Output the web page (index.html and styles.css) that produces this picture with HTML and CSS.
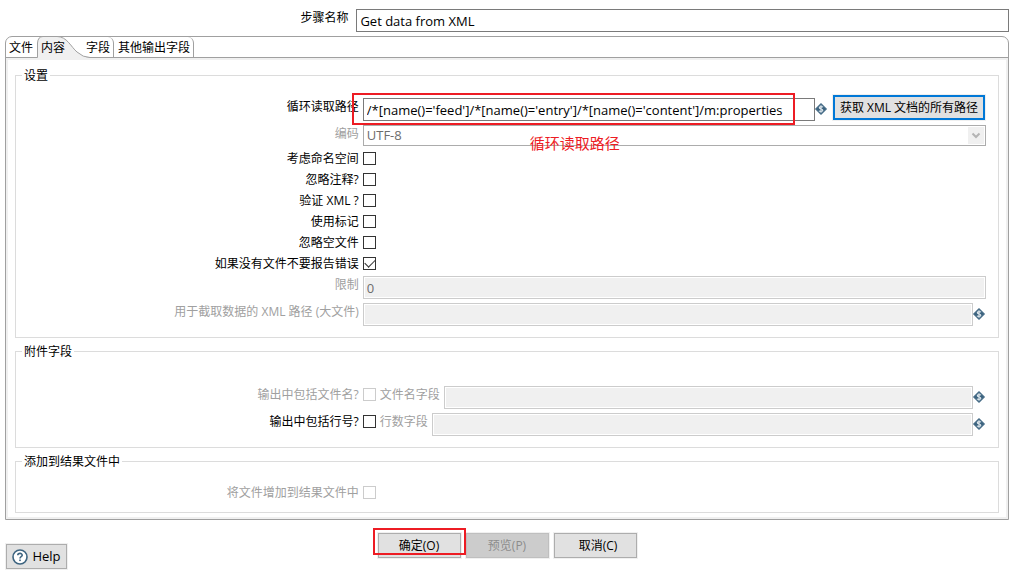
FILE: index.html
```html
<!DOCTYPE html>
<html lang="zh-CN">
<head>
  <meta charset="UTF-8" />
  <meta name="viewport" content="width=device-width, initial-scale=1.0"/>
  <title>Get data from XML</title>
  <link rel="stylesheet" href="styles.css">
</head>
<body>

  <svg class="defs" aria-hidden="true">
    <symbol id="variable" viewBox="0 0 12 13">
      <path d="M6 0.5 L11.5 6 L6 11.5 L0.5 6 Z" fill="#3d6480" stroke="#3d6480" stroke-linejoin="round"/>
      <path d="M7.9 4.3 C7.3 3.3 4.3 3.3 4.3 4.8 C4.3 6.4 7.8 5.6 7.8 7.3 C7.8 8.8 4.6 8.8 4 7.7 M6 2.2 V9.8" fill="none" stroke="#dfe7ec" stroke-width="1.2"/>
    </symbol>
  </svg>

  <div class="step-name">
    <label for="stepName">步骤名称</label>
    <input type="text" id="stepName" value="Get data from XML">
  </div>

  <div class="folder">
    <div class="tabs" role="tablist">
      <button class="tab" role="tab">文件</button>
      <button class="tab active" role="tab" aria-selected="true">
        <svg class="tab-shape" viewBox="0 0 54 22" aria-hidden="true">
          <path d="M0.5 22 V7 Q1 0.5 6 0.5 H20 C30 0.5 34 11 40 16 Q46 21.5 53 21.5 V22 Z" fill="#f0f0f0"/>
          <path d="M0.5 21.5 V7 Q1 0.5 6 0.5 H20 C30 0.5 34 11 40 16 Q46 21.5 53 21.5" fill="none" stroke="#a0a0a0"/>
        </svg>
        <span>内容</span>
      </button>
      <button class="tab line" role="tab">字段</button>
      <button class="tab line" role="tab">其他输出字段</button>
    </div>

    <div class="panel">
      <fieldset>
        <legend>设置</legend>
        <div class="row">
          <label class="name" for="loopPath">循环读取路径</label>
          <div class="field">
            <input type="text" id="loopPath" value="/*[name()='feed']/*[name()='entry']/*[name()='content']/m:properties">
            <span class="mark mark-path"></span>
          </div>
          <svg class="var"><use href="#variable"/></svg>
          <button class="btn btn-paths">获取 XML 文档的所有路径</button>
        </div>
        <div class="row off">
          <label class="name" for="encoding">编码</label>
          <div class="field">
            <select id="encoding" disabled>
              <option>UTF-8</option>
            </select>
            <svg class="arrow" viewBox="0 0 16 17" aria-hidden="true"><path d="M4.5 6.5 L8 10 L11.5 6.5" fill="none" stroke="#b4b4b4" stroke-width="2"/></svg>
            <span class="note">循环读取路径</span>
          </div>
        </div>
        <div class="row">
          <label class="name" for="namespace">考虑命名空间</label>
          <input type="checkbox" id="namespace">
        </div>
        <div class="row">
          <label class="name" for="comments">忽略注释?</label>
          <input type="checkbox" id="comments">
        </div>
        <div class="row">
          <label class="name" for="validate">验证 XML ?</label>
          <input type="checkbox" id="validate">
        </div>
        <div class="row">
          <label class="name" for="token">使用标记</label>
          <input type="checkbox" id="token">
        </div>
        <div class="row">
          <label class="name" for="emptyFile">忽略空文件</label>
          <input type="checkbox" id="emptyFile">
        </div>
        <div class="row">
          <label class="name" for="noError">如果没有文件不要报告错误</label>
          <input type="checkbox" id="noError" checked>
        </div>
        <div class="row off">
          <label class="name" for="limit">限制</label>
          <div class="field"><input type="text" id="limit" value="0" disabled></div>
        </div>
        <div class="row off">
          <label class="name" for="prune">用于截取数据的 XML 路径 (大文件)</label>
          <div class="field"><input type="text" id="prune" disabled></div>
          <svg class="var end"><use href="#variable"/></svg>
        </div>
      </fieldset>

      <fieldset class="extra">
        <legend>附件字段</legend>
        <div class="row off">
          <label class="name" for="inclFile">输出中包括文件名?</label>
          <input type="checkbox" id="inclFile" disabled>
          <label class="sub" for="fileField">文件名字段</label>
          <div class="field"><input type="text" id="fileField" disabled></div>
          <svg class="var end"><use href="#variable"/></svg>
        </div>
        <div class="row">
          <label class="name" for="inclRow">输出中包括行号?</label>
          <input type="checkbox" id="inclRow">
          <label class="sub" for="rowField">行数字段</label>
          <div class="field"><input type="text" id="rowField" disabled></div>
          <svg class="var end"><use href="#variable"/></svg>
        </div>
      </fieldset>

      <fieldset>
        <legend>添加到结果文件中</legend>
        <div class="row off">
          <label class="name" for="addResult">将文件增加到结果文件中</label>
          <input type="checkbox" id="addResult" disabled>
        </div>
      </fieldset>
    </div>
  </div>

  <div class="footer">
    <button class="btn btn-help">
      <svg viewBox="0 0 16 16" aria-hidden="true">
        <circle cx="8" cy="8" r="7" fill="#fff" stroke="#3d6480" stroke-width="1.6"/>
        <path d="M5.8 6.3 C5.8 3.7 10.2 3.7 10.2 6.2 C10.2 7.7 8 7.6 8 9.4" fill="none" stroke="#3d6480" stroke-width="1.6"/>
        <rect x="7.2" y="10.5" width="1.6" height="1.6" fill="#3d6480"/>
      </svg>
      Help
    </button>
    <div class="actions">
      <div class="ok">
        <button class="btn">确定(O)</button>
        <span class="mark mark-ok"></span>
      </div>
      <button class="btn" disabled>预览(P)</button>
      <button class="btn btn-cancel">取消(C)</button>
    </div>
  </div>

</body>
</html>
```
FILE: styles.css
```css
* {
  box-sizing: border-box;
}

body {
  margin: 0;
  padding: 9px 5px 5px;
  background: #fff;
  color: #000;
  font-family: "Open Sans", "Noto Sans CJK SC", sans-serif;
  font-size: 12px;
  line-height: 17px;
}

button, input, select {
  margin: 0;
  font: inherit;
  color: inherit;
}

.defs {
  position: absolute;
  width: 0;
  height: 0;
}

.step-name {
  display: flex;
  margin-bottom: 4px;
}

.step-name label {
  width: 35%;
  padding-right: 8px;
  text-align: right;
}

.step-name input {
  flex: 1;
}

input[type="text"] {
  display: block;
  width: 100%;
  min-width: 0;
  height: 23px;
  padding: 0 3px;
  border: 1px solid #7a7a7a;
  border-radius: 0;
  background: #fff;
  font-size: 13px;
}

input[type="text"]:disabled {
  border-color: #ccc;
  background: #f0f0f0;
  box-shadow: inset 0 0 0 1px #fff;
  color: #6d6d6d;
}

/* tabs */
.folder {
  border: 1px solid #a0a0a0;
  border-radius: 7px 7px 0 0;
}

.tabs {
  display: flex;
  height: 21px;
  border-bottom: 1px solid #a0a0a0;
}

.tab {
  height: 20px;
  padding: 0 4px 0 3px;
  border: 0;
  background: none;
  white-space: nowrap;
}

.tab.line {
  padding: 0 3px 0 4px;
  border-right: 1px solid #a0a0a0;
  border-top-right-radius: 6px;
}

.tab.active {
  position: relative;
  width: 45px;
  padding-left: 4px;
  text-align: left;
}

.tab.active span {
  position: relative;
}

.tab-shape {
  position: absolute;
  left: 0;
  top: -1px;
  width: 54px;
  height: 22px;
}

.panel {
  display: flex;
  flex-direction: column;
  gap: 5px;
  padding: 7px 7px 4px;
  border: 2px solid #f0f0f0;
}

fieldset {
  min-width: 0;
  margin: 0;
  padding: 14px 12px 11px 5px;
  border: 1px solid #dcdcdc;
}

fieldset.extra {
  padding-top: 26px;
}

legend {
  margin-left: 1px;
  padding: 0 2px;
}

.row {
  display: flex;
  align-items: flex-start;
  gap: 4px;
}

.row + .row {
  margin-top: 4px;
}

.name {
  flex: none;
  width: 35%;
  text-align: right;
  white-space: nowrap;
}

.off, .sub {
  color: #a0a0a0;
}

.field {
  position: relative;
  flex: 1;
  min-width: 0;
}

.var {
  width: 12px;
  height: 13px;
  margin: 5px 0 0 -4px;
}

.var.end {
  margin-right: 1px;
}

input[type="checkbox"] {
  appearance: none;
  width: 13px;
  height: 13px;
  margin: 2px 0;
  border: 1px solid #333;
  background: #fff;
}

input[type="checkbox"]:disabled {
  border-color: #ccc;
}

input[type="checkbox"]:checked::after {
  content: "";
  display: block;
  width: 9px;
  height: 5px;
  margin: 2px 1px;
  border: solid #333;
  border-width: 0 0 1px 1px;
  transform: translateY(-1px) rotate(-45deg);
}

select {
  display: block;
  appearance: none;
  width: 100%;
  height: 21px;
  padding: 0 3px;
  border: 1px solid #acacac;
  border-radius: 0;
  background: #fff;
  font-size: 13px;
}

select:disabled {
  color: #6d6d6d;
  opacity: 1;
}

.arrow {
  position: absolute;
  top: 2px;
  right: 2px;
  width: 16px;
  height: 17px;
  background: #f0f0f0;
}

/* buttons */
.btn {
  width: 83px;
  height: 25px;
  padding: 0;
  border: 1px solid #adadad;
  background: #e1e1e1;
  box-shadow: 0 0 0 1px #f0f0f0;
  white-space: nowrap;
}

.btn:disabled {
  border-color: #bfbfbf;
  background: #ccc;
  color: #8c8c8c;
}

.btn-paths {
  width: 152px;
  margin: -3px 1px -3px 2px;
  border: 2px solid #0078d7;
}

.btn-cancel {
  padding-left: 6px;
}

.btn-help {
  display: flex;
  align-items: center;
  justify-content: center;
  gap: 4px;
  width: 61px;
  margin-left: 1px;
  font-size: 13px;
}

.btn-help svg {
  width: 16px;
  height: 16px;
}

.footer {
  display: grid;
  grid-template-columns: 1fr auto 1fr;
  align-items: end;
  margin-top: 13px;
}

.actions {
  display: flex;
  gap: 5px;
  padding-bottom: 11px;
}

.ok {
  position: relative;
}

/* red marks over the form */
.mark {
  position: absolute;
  z-index: 1;
  border: 2px solid #ed1c24;
  pointer-events: none;
}

.mark-path {
  inset: -5px 20px -4px -11px;
}

.mark-ok {
  inset: -5px -5px 3px;
}

.note {
  position: absolute;
  left: 167px;
  top: 10px;
  color: #ed1c24;
  font-size: 15px;
}
```
